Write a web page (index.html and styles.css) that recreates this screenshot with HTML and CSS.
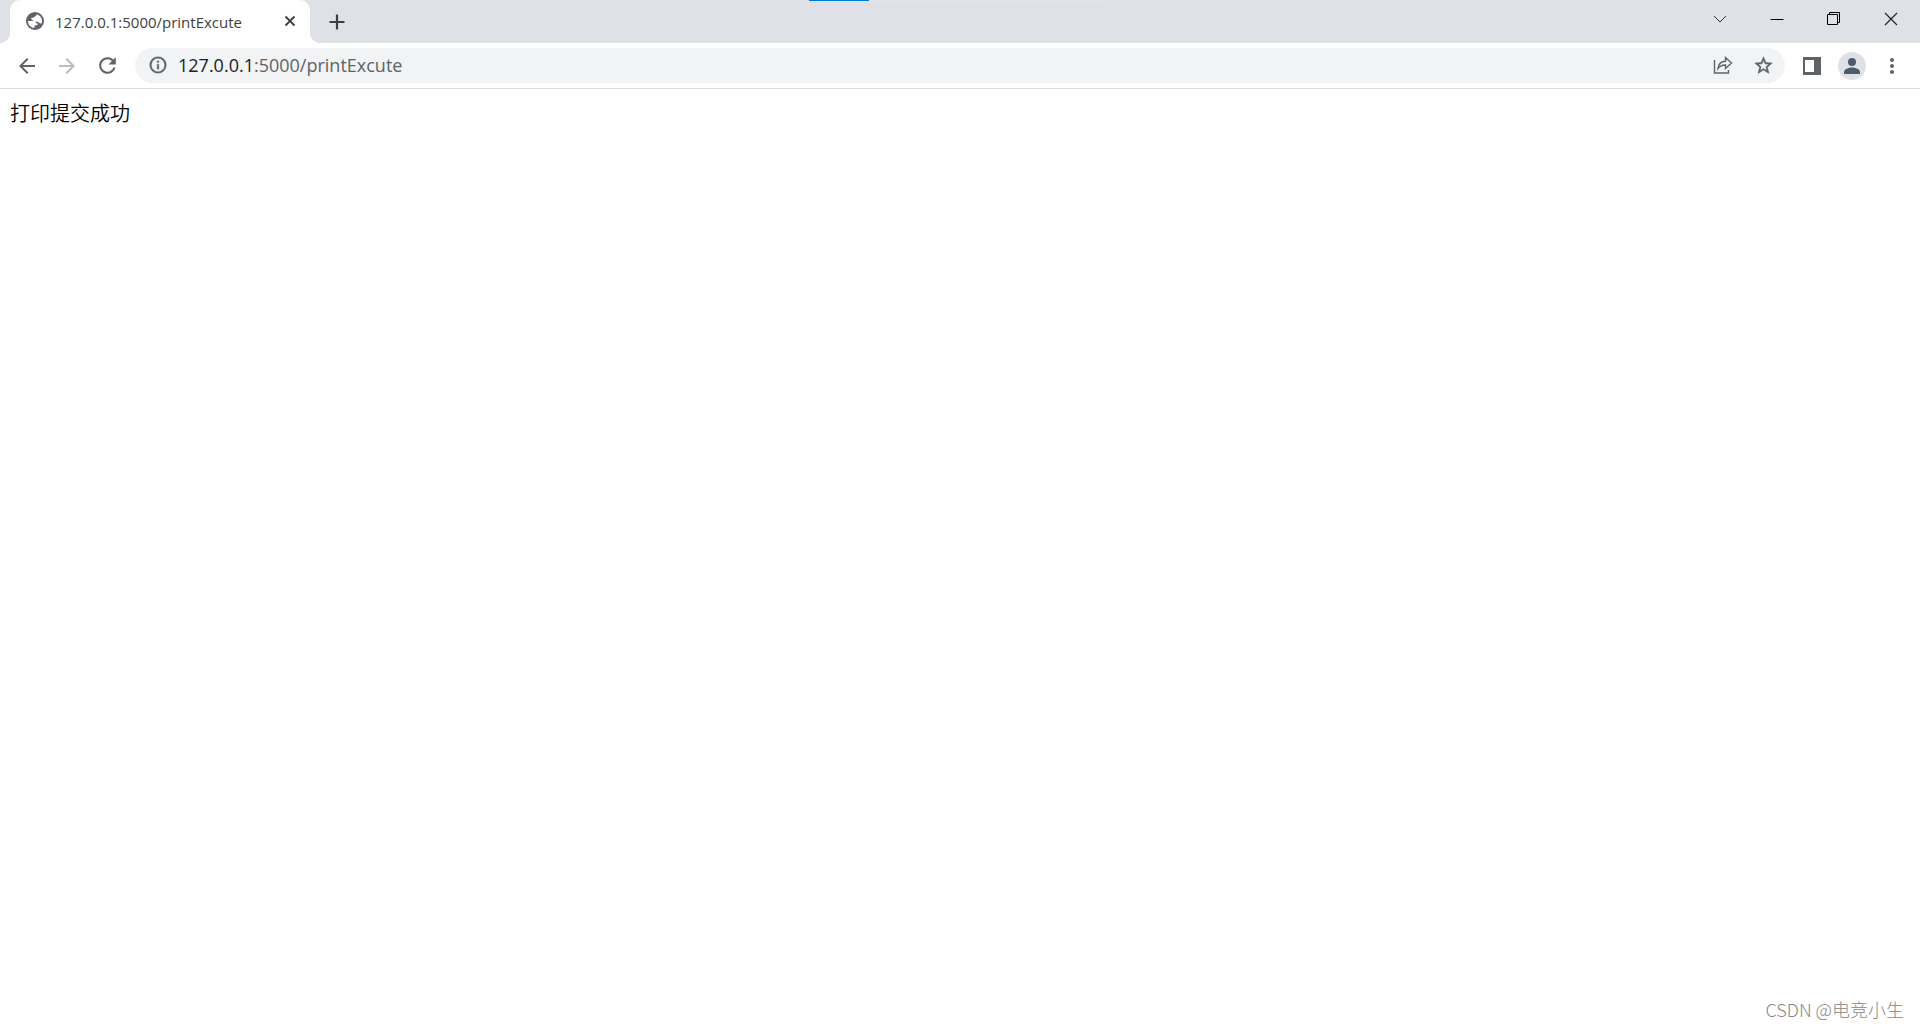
FILE: index.html
```html
<!DOCTYPE html>
<html lang="zh-CN">
<head>
<meta charset="utf-8">
<title>127.0.0.1:5000/printExcute</title>
<link rel="stylesheet" href="styles.css">
</head>
<body>
<div class="progress"><div class="progress-fill"></div></div>
<header class="tab-strip">
  <div class="tab">
    <svg class="tab-icon" viewBox="0 0 18 18" aria-hidden="true"><circle cx="9" cy="9" r="9" fill="#5f6368"/><path d="M2 9h4.500c2 0 3.500 1 3.500 2.300H11.500v2H9.500c-1 .3-1.200 1.300-1.200 2.700C4.500 15.600 2 12.800 2 9zM10.500 2.200C14 3 16 5.500 16 9c0 .8-.2 1.500-.4 2.200-.8.500-2 .3-2.600-.5-.5-.7-1-1-2-1H8.500C7.500 9.500 7.200 8 6 7.700c-1-.3-1.200-1.700 0-1.900h1.500c.8-.1.800-1.300 1.600-1.500.9-.2 1.400-1 1.400-2.100z" fill="#fff"/></svg>
    <span class="tab-title">127.0.0.1:5000/printExcute</span>
    <button class="tab-close" aria-label="关闭标签页"><svg width="12" height="12" viewBox="0 0 12 12"><path d="M1.500 1.500l9 9m0-9l-9 9" stroke="#3c4043" stroke-width="1.800"/></svg></button>
  </div>
  <button class="new-tab" aria-label="新标签页"><svg width="16" height="16" viewBox="0 0 16 16"><path d="M8 .5v15M.5 8h15" stroke="#3c4043" stroke-width="2.200"/></svg></button>
  <div class="window-controls">
    <button aria-label="搜索标签页"><svg width="14" height="14" viewBox="0 0 14 14"><path d="M1 4l6 6 6-6" stroke="#333" fill="none"/></svg></button>
    <button aria-label="最小化"><svg width="14" height="14" viewBox="0 0 14 14"><path d="M.5 7.500h13" stroke="#000"/></svg></button>
    <button aria-label="还原"><svg width="14" height="14" viewBox="0 0 14 14"><path d="M.5 2.500h10v10H.5zM2.500 2.500v-2h10v10h-2" stroke="#000" fill="none"/></svg></button>
    <button aria-label="关闭"><svg width="14" height="14" viewBox="0 0 14 14"><path d="M1 1l12 12m0-12L1 13" stroke="#222" stroke-width="1.200"/></svg></button>
  </div>
</header>
<nav class="toolbar">
  <button aria-label="后退"><svg width="24" height="24" viewBox="0 0 24 24"><path d="M20 11H7.830l5.590-5.590L12 4l-8 8 8 8 1.410-1.410L7.830 13H20z" fill="#5f6368"/></svg></button>
  <button aria-label="前进" disabled><svg width="24" height="24" viewBox="0 0 24 24"><path d="M4 11h12.170l-5.590-5.590L12 4l8 8-8 8-1.410-1.410L16.170 13H4z" fill="#babcbe"/></svg></button>
  <button aria-label="重新加载"><svg width="25" height="25" viewBox="0 0 24 24"><path d="M17.650 6.350A7.960 7.960 0 0 0 12 4a8 8 0 1 0 7.730 10h-2.080A6 6 0 1 1 12 6c1.660 0 3.140.69 4.220 1.780L13 11h7V4z" fill="#5f6368"/></svg></button>
  <div class="omnibox">
    <button class="site-info" aria-label="查看网站信息"><svg width="20" height="20" viewBox="0 0 24 24"><path d="M11 17h2v-6h-2zm1-15a10 10 0 1 0 0 20 10 10 0 0 0 0-20zm0 18a8 8 0 1 1 0-16 8 8 0 0 1 0 16zM11 9h2V7h-2z" fill="#5f6368" stroke="#5f6368" stroke-width=".4"/></svg></button>
    <div class="url"><span class="host">127.0.0.1</span>:5000/printExcute</div>
    <button aria-label="分享此网页"><svg width="20" height="20" viewBox="0 0 20 20"><path d="M1.500 5v13H15.500v-3M5 13.500C5.500 9 8 6.500 12.500 6.300V2.500L18.500 8l-6 5.500V10C9 10 6.800 11 5 13.500z" fill="none" stroke="#5f6368" stroke-width="1.400"/></svg></button>
    <button aria-label="为此标签页添加书签"><svg width="21" height="21" viewBox="0 0 24 24"><path d="M22 9.240l-7.190-.62L12 2 9.190 8.630 2 9.240l5.460 4.730L5.820 21 12 17.270 18.180 21l-1.630-7.030zM12 15.400l-3.760 2.270 1-4.280-3.320-2.880 4.380-.38L12 6.100l1.710 4.040 4.380.38-3.320 2.880 1 4.280z" fill="#5f6368" stroke="#5f6368" stroke-width=".6"/></svg></button>
  </div>
  <button aria-label="显示侧边栏"><svg width="18" height="18" viewBox="0 0 18 18"><path fill-rule="evenodd" d="M0 0h18v18H0zM2 3v12h9V3z" fill="#5f6368"/></svg></button>
  <button aria-label="个人资料"><svg width="28" height="28" viewBox="0 0 28 28"><circle cx="14" cy="14" r="14" fill="#dee1e6"/><circle cx="14" cy="10" r="4" fill="#4e5a6e"/><path d="M6 22v-2c0-3 5-4.500 8-4.500s8 1.500 8 4.500v2z" fill="#4e5a6e"/></svg></button>
  <button aria-label="菜单"><svg width="4" height="18" viewBox="0 0 4 18"><g fill="#5f6368"><circle cx="2" cy="3" r="2"/><circle cx="2" cy="9" r="2"/><circle cx="2" cy="15" r="2"/></g></svg></button>
</nav>
<main class="page">打印提交成功</main>
<footer class="watermark">CSDN @电竞小生</footer>
</body>
</html>
```
FILE: styles.css
```css
* { box-sizing: border-box; }

body {
  display: flex;
  flex-direction: column;
  min-height: 100vh;
  margin: 0;
  background: #fff;
  font-family: "Open Sans", "Noto Sans CJK SC", sans-serif;
}

button {
  display: flex;
  align-items: center;
  justify-content: center;
  flex: none;
  padding: 0;
  border: 0;
  background: none;
}

/* Loading indicator over the top edge of the window */
.progress {
  position: absolute;
  top: 0;
  left: 809px;
  width: 301px;
  height: 1px;
  background: #e5e5e5;
}

.progress-fill {
  width: 20%;
  height: 1px;
  background: #0078d7;
}

.tab-strip {
  display: flex;
  height: 43px;
  padding-left: 10px;
  background: #dee1e6;
}

.tab {
  position: relative;
  display: flex;
  align-items: center;
  width: 300px;
  padding: 0 9px 1px 16px;
  border-radius: 10px 10px 0 0;
  background: #fff;
}

.tab::before,
.tab::after {
  content: "";
  position: absolute;
  bottom: 0;
  width: 10px;
  height: 10px;
}

.tab::before {
  right: 100%;
  background: radial-gradient(circle at 0 0, transparent 10px, #fff 10px);
}

.tab::after {
  left: 100%;
  background: radial-gradient(circle at 100% 0, transparent 10px, #fff 10px);
}

.tab-icon {
  width: 18px;
  height: 18px;
}

.tab-title {
  flex: 1;
  padding: 2px 0 0 11px;
  color: #3c4043;
  font-size: 15px;
  line-height: 20px;
}

.tab-close {
  width: 22px;
  height: 22px;
}

.new-tab {
  width: 36px;
  margin-left: 9px;
}

.window-controls {
  display: flex;
  height: 37px;
  margin-left: auto;
  padding-right: 1px;
}

.window-controls button {
  width: 57px;
}

.toolbar {
  display: flex;
  align-items: center;
  height: 46px;
  padding: 0 8px 0 7px;
  border-bottom: 1px solid #dadce0;
}

.toolbar button {
  width: 40px;
  height: 34px;
}

.omnibox {
  display: flex;
  flex: 1;
  align-items: center;
  height: 35px;
  margin: 0 7px 0 8px;
  padding: 0 2px 1px 3px;
  border-radius: 18px;
  background: #f1f3f4;
}

.url {
  flex: 1;
  color: #5f6368;
  font-size: 18px;
  line-height: 24px;
}

.host {
  color: #202124;
}

.page {
  flex: 1;
  padding: 10px;
  color: #000;
  font-family: "Noto Sans CJK SC", sans-serif;
  font-size: 20px;
  font-weight: 350;
  line-height: 28px;
}

.watermark {
  padding: 0 16px 5px;
  color: #888;
  font-family: "Noto Sans CJK SC", sans-serif;
  font-size: 18px;
  font-weight: 300;
  line-height: 28px;
  text-align: right;
}
```
